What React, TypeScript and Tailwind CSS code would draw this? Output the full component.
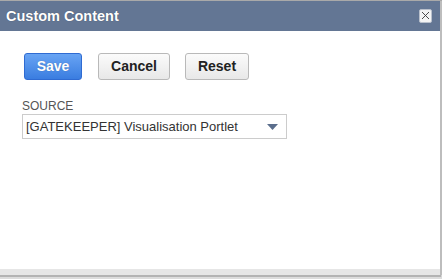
import React from "react";

export default function App() {
  return (
    <div
      className="w-[442px] h-[279px] bg-[#d6d6d6] overflow-hidden flex flex-col"
      style={{ fontFamily: '"Liberation Sans", Arial, sans-serif' }}
    >
      <div className="h-[1px] bg-[#a9a9a9] w-full" />
      <div className="flex">
        <div className="w-[440px] flex flex-col">
          <div className="h-[30px] bg-[#637694] flex items-center justify-between pl-[6px] pr-[8px]">
            <span className="text-white font-bold text-[14.5px] leading-none [text-shadow:0_0_1px_rgba(0,0,0,0.4)]">
              Custom Content
            </span>
            <div className="w-[13px] h-[14px] rounded-[2px] bg-[#f4f4f4] border border-[#b9c0cc] flex items-center justify-center mt-[-1px]">
              <svg width="9" height="9" viewBox="0 0 9 9">
                <path d="M1 1 L8 8 M8 1 L1 8" stroke="#3a3a3a" strokeWidth="0.9" fill="none" />
              </svg>
            </div>
          </div>
          <div className="h-[238px] bg-white pt-[22px] pl-[24px]">
            <div className="flex gap-[16px]">
              <button className="w-[58px] h-[27px] rounded-[3px] border border-[#2f6bd2] bg-gradient-to-b from-[#68a4f4] to-[#3a7de0] text-white font-bold text-[14px] flex items-center justify-center [text-shadow:0_0_1px_rgba(0,0,0,0.3)]">
                Save
              </button>
              <button className="w-[72px] h-[27px] rounded-[3px] border border-[#b9b9b9] bg-gradient-to-b from-[#fbfbfb] to-[#e8e8e8] text-[#222] font-bold text-[14px] flex items-center justify-center">
                Cancel
              </button>
              <button className="w-[64px] h-[27px] rounded-[3px] border border-[#b9b9b9] bg-gradient-to-b from-[#fbfbfb] to-[#e8e8e8] text-[#222] font-bold text-[14px] flex items-center justify-center -ml-[1px]">
                Reset
              </button>
            </div>
            <div className="-ml-[2px] mt-[20px]">
              <div className="text-[12px] text-[#555] leading-[13px]">SOURCE</div>
              <div className="mt-[1px] w-[265px] h-[25px] border border-[#cccccc] flex items-center justify-between pl-[3px] pr-[8px]">
                <span className="text-[13px] text-[#333]">[GATEKEEPER] Visualisation Portlet</span>
                <svg width="11" height="6" viewBox="0 0 11 6">
                  <path d="M0 0 H11 L5.5 6 Z" fill="#5b6e8c" />
                </svg>
              </div>
            </div>
          </div>
          <div className="h-[6px] bg-[#e6e6e6]" />
        </div>
        <div className="w-[2px] bg-[#bdbdbd]" />
      </div>
      <div className="h-[2px] bg-[#b3b3b3] w-[441px]" />
      <div className="flex-1 bg-[#dcdcdc]" />
    </div>
  );
}
